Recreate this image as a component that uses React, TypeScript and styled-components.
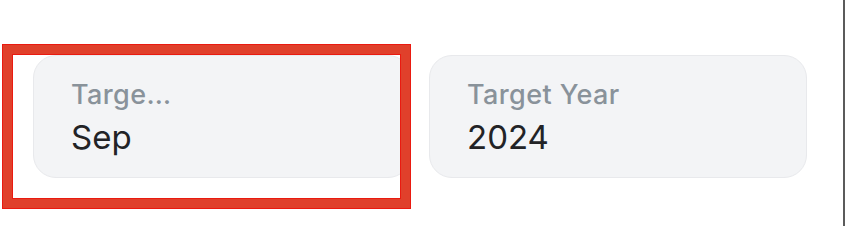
import styled, { createGlobalStyle } from 'styled-components';

const GlobalStyle = createGlobalStyle`
  html, body {
    margin: 0;
    padding: 0;
    background: #fff;
  }
  body {
    font-family: Inter, "Noto Sans", "Liberation Sans", sans-serif;
  }
`;

const Frame = styled.div`
  width: 843px;
  height: 226px;
  border-right: 2px solid #5b5b5b;
  box-sizing: content-box;
  background: #fff;
  overflow: hidden;
`;

const Row = styled.div`
  display: flex;
  gap: 18px;
  padding: 55px 0 0 33px;
`;

const CardWrap = styled.div`
  position: relative;
`;

const Card = styled.div`
  box-sizing: border-box;
  width: 378px;
  height: 123px;
  padding: 23px 36px 0 37px;
  background: #f3f4f6;
  border: 1px solid #e8e9ec;
  border-radius: 23px;
`;

const Label = styled.div`
  font-size: 27px;
  font-weight: 500;
  letter-spacing: 0.4px;
  line-height: 32px;
  color: #89929a;
  white-space: nowrap;
`;

const Value = styled.div`
  margin-top: 6px;
  font-size: 33px;
  line-height: 40px;
  color: #222326;
`;

const Highlight = styled.div`
  position: absolute;
  left: -30px;
  top: -10px;
  width: 407px;
  height: 163px;
  box-sizing: border-box;
  border: 9px solid #e0402b;
  box-shadow: 0 0 0 1px #ea1a10, inset 0 0 0 1px #ea1a10;
  pointer-events: none;
`;

interface FieldProps {
  label: string;
  value: string;
  highlighted?: boolean;
}

const Field = ({ label, value, highlighted }: FieldProps) => (
  <CardWrap>
    <Card>
      <Label>{label}</Label>
      <Value>{value}</Value>
    </Card>
    {highlighted && <Highlight />}
  </CardWrap>
);

const App = () => {
  return (
    <>
      <GlobalStyle />
      <Frame>
        <Row>
          <Field label="Targe…" value="Sep" highlighted />
          <Field label="Target Year" value="2024" />
        </Row>
      </Frame>
    </>
  );
};

export default App;
